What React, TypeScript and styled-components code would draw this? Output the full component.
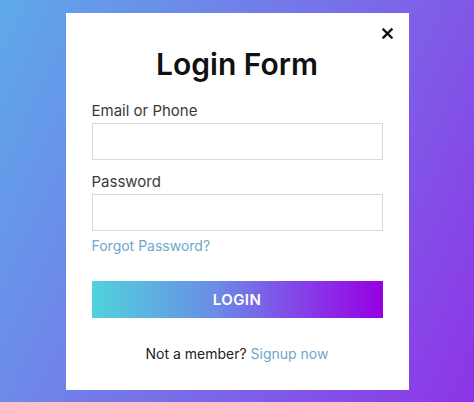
import React from 'react';
import styled, {createGlobalStyle} from 'styled-components';

const GlobalStyle = createGlobalStyle`
  html, body {
    margin: 0;
    padding: 0;
  }
  body {
    font-family: Inter, "Open Sans", Arial, sans-serif;
  }
`

const Page = styled.div`
  width: 474px;
  height: 402px;
  display: flex;
  align-items: center;
  justify-content: center;
  background: linear-gradient(115deg, #5eaaea 0%, #7772e8 50%, #8d34e6 100%);
  overflow: hidden;`

const Card = styled.form`
  position: relative;
  box-sizing: border-box;
  width: 343px;
  height: 377px;
  padding: 32px 26px 28px;
  background: #fff;
  display: flex;
  flex-direction: column;`

const Close = styled.button`
  position: absolute;
  top: 15px;
  right: 16px;
  width: 11px;
  height: 11px;
  padding: 0;
  border: none;
  background: none;
  display: flex;
  cursor: pointer;`

const Title = styled.h1`
  margin: 0 0 19px;
  font-size: 30px;
  line-height: 38px;
  font-weight: 600;
  color: #111;
  text-align: center;`

const Field = styled.div<{ gap: number }>`
  display: flex;
  flex-direction: column;
  margin-bottom: ${props => `${props.gap}px`};`

const Label = styled.label`
  font-size: 15px;
  line-height: 18px;
  color: #3a3a3a;
  margin-bottom: 3px;`

const Input = styled.input`
  box-sizing: border-box;
  height: 37px;
  width: 100%;
  border: 1px solid #d9d9d9;
  outline: none;
  padding: 0 10px;
  font-family: inherit;
  font-size: 15px;`

const Link = styled.a`
  color: #6fa6cb;
  text-decoration: none;
  font-size: 14px;
  line-height: 17px;`

const Forgot = styled(Link)`
  margin-top: 6px;
  align-self: flex-start;`

const Submit = styled.button`
  margin-top: 27px;
  height: 37px;
  border: none;
  background: linear-gradient(to right, #50d3dc 0%, #6a8de6 42%, #8a32e8 78%, #9600e2 100%);
  color: #fff;
  font-family: inherit;
  font-size: 15px;
  font-weight: 600;
  letter-spacing: 0.4px;
  cursor: pointer;`

const Footer = styled.p`
  margin: 27px 0 0;
  font-size: 14px;
  line-height: 17px;
  color: #222;
  text-align: center;`

export default function App() {
    return (
        <>
            <GlobalStyle/>
            <Page>
                <Card onSubmit={e => e.preventDefault()}>
                    <Close type="button" aria-label="Close">
                        <svg width="11" height="11" viewBox="0 0 11 11">
                            <path d="M1.5 1.5 L9.5 9.5 M9.5 1.5 L1.5 9.5" stroke="#111" strokeWidth="2.4" strokeLinecap="square"/>
                        </svg>
                    </Close>
                    <Title>Login Form</Title>
                    <Field gap={13}>
                        <Label>Email or Phone</Label>
                        <Input type="text"/>
                    </Field>
                    <Field gap={0}>
                        <Label>Password</Label>
                        <Input type="password"/>
                    </Field>
                    <Forgot href="#">Forgot Password?</Forgot>
                    <Submit type="submit">LOGIN</Submit>
                    <Footer>Not a member? <Link href="#">Signup now</Link></Footer>
                </Card>
            </Page>
        </>
    )
}
